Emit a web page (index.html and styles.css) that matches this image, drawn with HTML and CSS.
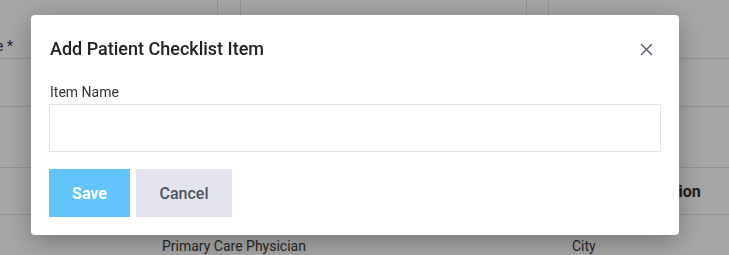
FILE: index.html
```html
<!DOCTYPE html>
<html>
<head>
<meta charset="utf-8">
<link rel="stylesheet" href="styles.css">
</head>
<body>
<div class="page">
  <div class="form-row row-first">
    <div class="cell c-label"><span>Patient Name *</span></div>
    <div class="cell c-gap"></div>
    <div class="cell c-main"></div>
    <div class="cell c-gap2"></div>
    <div class="cell c-rest"></div>
  </div>
  <div class="form-row row-second"></div>
  <div class="spacer"></div>
  <div class="table-head">
    <div class="th th-1"></div>
    <div class="th th-2">Practice Location</div>
  </div>
  <div class="table-row">
    <div class="td td-1">Primary Care Physician</div>
    <div class="td td-2">City</div>
  </div>
</div>

<div class="overlay">
  <div class="modal">
    <div class="modal-header">
      <h2 class="modal-title">Add Patient Checklist Item</h2>
      <button class="close-btn" aria-label="Close">
        <svg width="13" height="13" viewBox="0 0 13 13"><path d="M1.5 1.5 L11.5 11.5 M11.5 1.5 L1.5 11.5" stroke="#5f6470" stroke-width="1.6" stroke-linecap="round" fill="none"/></svg>
      </button>
    </div>
    <label class="field-label">Item Name</label>
    <input class="field-input" type="text">
    <div class="actions">
      <button class="btn btn-save">Save</button>
      <button class="btn btn-cancel">Cancel</button>
    </div>
  </div>
</div>
</body>
</html>
```

FILE: styles.css
```css
* { box-sizing: border-box; }
html, body { margin: 0; padding: 0; }
body {
  width: 729px;
  height: 255px;
  overflow: hidden;
  background: #ffffff;
  font-family: Roboto, "Liberation Sans", Arial, sans-serif;
  color: #3a3a3a;
}

.page { width: 729px; }

.form-row {
  display: flex;
  border-bottom: 1px solid #e2e2e2;
}
.row-first { height: 59px; }
.row-second { height: 48px; }

.cell { height: 100%; }
.c-label {
  width: 218px;
  display: flex;
  justify-content: flex-end;
  align-items: flex-end;
  padding-right: 204px;
  padding-bottom: 4px;
  font-size: 14px;
  line-height: 16px;
  white-space: nowrap;
  border-right: 1px solid #e2e2e2;
}
.c-label span { flex-shrink: 0; }
.c-gap { width: 23px; border-right: 1px solid #e2e2e2; }
.c-main { width: 286px; border-right: 1px solid #e2e2e2; }
.c-gap2 { width: 22px; border-right: 1px solid #e2e2e2; }
.c-rest { flex: 1; }

.spacer { height: 61px; border-bottom: 1px solid #e2e2e2; }

.table-head {
  display: flex;
  height: 47px;
  align-items: center;
  border-bottom: 1px solid #e2e2e2;
  font-size: 16px;
  font-weight: 700;
  color: #2c2c2c;
  white-space: nowrap;
}
.th-1 { width: 572px; }
.th-2 { flex: 1; padding-left: 3px; }

.table-row {
  display: flex;
  padding-top: 23px;
  font-size: 14px;
  color: #3a3a3a;
}
.td-1 { width: 572px; padding-left: 162px; }
.td-2 { flex: 1; }

.overlay {
  position: fixed;
  inset: 0;
  background: rgba(0, 0, 0, 0.35);
  padding: 15px 0 0 31px;
}

.modal {
  width: 648px;
  height: 220px;
  background: #ffffff;
  border-radius: 4px;
  box-shadow: 0 6px 28px rgba(0, 0, 0, 0.3);
  padding: 23px 18px 18px 18px;
  display: flex;
  flex-direction: column;
}

.modal-header {
  display: flex;
  justify-content: space-between;
  align-items: center;
  height: 22px;
}
.modal-title {
  margin: 0 0 0 1px;
  font-size: 18px;
  font-weight: 500;
  color: #222222;
  line-height: 22px;
}
.close-btn {
  border: 0;
  background: none;
  padding: 0;
  width: 13px;
  height: 13px;
  margin-right: 8px;
  display: flex;
}

.field-label {
  margin-top: 24px;
  margin-left: 1px;
  font-size: 14px;
  line-height: 16px;
  color: #333333;
}
.field-input {
  margin-top: 4px;
  width: 612px;
  height: 48px;
  border: 1px solid #e4e4ef;
  border-radius: 0;
  outline: none;
  font-family: inherit;
}

.actions {
  display: flex;
  gap: 6px;
  margin-top: 17px;
}
.btn {
  height: 48px;
  border: 0;
  border-radius: 0;
  font-family: inherit;
  font-size: 16px;
  font-weight: 500;
  padding: 0 10px;
}
.btn-save {
  width: 81px;
  background: #63c4fc;
  color: #ffffff;
  font-weight: 700;
}
.btn-cancel {
  width: 96px;
  background: #e3e4ee;
  color: #4d5161;
}
```
